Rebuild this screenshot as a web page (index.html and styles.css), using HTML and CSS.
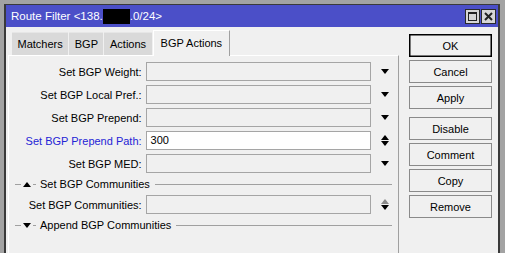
FILE: index.html
```html
<!DOCTYPE html>
<html>
<head>
<meta charset="utf-8">
<link rel="stylesheet" href="styles.css">
</head>
<body>
<div class="window">
  <div class="titlebar">
    <div class="title">Route Filter &lt;138.<span class="redact"></span>.0/24&gt;</div>
    <div class="tb-btns">
      <div class="tb-btn"><span class="max-icon"></span></div>
      <div class="tb-btn">
        <svg width="9" height="9" viewBox="0 0 9 9"><path d="M1 1L8 8M8 1L1 8" stroke="#222" stroke-width="2"/></svg>
      </div>
    </div>
  </div>
  <div class="content">
    <div class="main">
      <div class="tabs">
        <div class="tab">Matchers</div>
        <div class="tab">BGP</div>
        <div class="tab">Actions</div>
        <div class="tab active">BGP Actions</div>
      </div>
      <div class="panel">
        <div class="row">
          <div class="label">Set BGP Weight:</div>
          <div class="field"></div>
          <div class="ctl"><span class="tri-down"></span></div>
        </div>
        <div class="row">
          <div class="label">Set BGP Local Pref.:</div>
          <div class="field"></div>
          <div class="ctl"><span class="tri-down"></span></div>
        </div>
        <div class="row">
          <div class="label">Set BGP Prepend:</div>
          <div class="field"></div>
          <div class="ctl"><span class="tri-down"></span></div>
        </div>
        <div class="row">
          <div class="label blue">Set BGP Prepend Path:</div>
          <div class="field white">300</div>
          <div class="ctl spin"><span class="tri-up"></span><span class="tri-down"></span></div>
        </div>
        <div class="row">
          <div class="label">Set BGP MED:</div>
          <div class="field"></div>
          <div class="ctl"><span class="tri-down"></span></div>
        </div>
        <div class="section">
          <span class="line short"></span>
          <span class="tri-up"></span>
          <span class="line tiny"></span>
          <span class="sec-text">Set BGP Communities</span>
          <span class="line grow"></span>
        </div>
        <div class="row">
          <div class="label">Set BGP Communities:</div>
          <div class="field"></div>
          <div class="ctl spin"><span class="tri-up gray"></span><span class="tri-down"></span></div>
        </div>
        <div class="section sec2">
          <span class="line short"></span>
          <span class="tri-down"></span>
          <span class="line tiny"></span>
          <span class="sec-text">Append BGP Communities</span>
          <span class="line grow"></span>
        </div>
      </div>
    </div>
    <div class="buttons">
      <div class="btn default">OK</div>
      <div class="btn">Cancel</div>
      <div class="btn">Apply</div>
      <div class="btn group">Disable</div>
      <div class="btn">Comment</div>
      <div class="btn">Copy</div>
      <div class="btn">Remove</div>
    </div>
  </div>
</div>
</body>
</html>
```
FILE: styles.css
```css
html, body {
  margin: 0;
  padding: 0;
  background: #a3a3a3;
  font-family: "Liberation Sans", Arial, sans-serif;
  font-size: 11px;
  color: #000;
  overflow: hidden;
}
.window {
  margin: 4px 0 0 4px;
  width: 492px;
  height: 260px;
  border: 2px solid #3a3a3a;
  border-top: 1px solid #3a3a3a;
  border-bottom: none;
  background: #f0f0f0;
}
.titlebar {
  height: 22px;
  background: #4b4fc8;
  display: flex;
  align-items: center;
  justify-content: space-between;
  padding: 0 2px 0 5px;
}
.title {
  color: #fff;
  font-size: 11.5px;
  display: flex;
  align-items: center;
  white-space: pre;
}
.redact {
  display: inline-block;
  width: 27px;
  height: 15px;
  background: #000;
}
.tb-btns {
  display: flex;
  gap: 1px;
  margin-top: 1px;
}
.tb-btn {
  width: 13px;
  height: 13px;
  border: 1px solid #2a2a2a;
  background: #d6d6d6;
  display: flex;
  align-items: center;
  justify-content: center;
}
.max-icon {
  width: 7px;
  height: 6px;
  border: 1px solid #222;
  border-top-width: 2px;
}
.content {
  display: flex;
}
.main {
  margin-left: 2px;
  width: 391px;
}
.tabs {
  height: 28px;
  display: flex;
  align-items: flex-end;
  padding-left: 4px;
}
.tab {
  height: 22px;
  line-height: 22px;
  background: #d9d9d9;
  padding: 0 5.5px;
  margin-right: 1px;
  border-top: 1px solid #e6e6e6;
}
.tab.active {
  height: 25px;
  line-height: 24px;
  background: #f0f0f0;
  border-top: 1px solid #fff;
  border-left: 1px solid #fff;
  border-right: 1px solid #a0a0a0;
  padding: 0 7px;
  margin-bottom: -1px;
  position: relative;
}
.panel {
  border-top: 1px solid #fff;
  border-left: 1px solid #fff;
  border-right: 1px solid #a0a0a0;
  height: 200px;
  padding-top: 4px;
}
.row {
  height: 23px;
  display: flex;
  align-items: center;
}
.label {
  width: 134px;
  text-align: right;
  padding-right: 4px;
}
.label.blue {
  color: #2424d6;
}
.field {
  width: 224px;
  height: 17px;
  border: 1px solid #a5a5a5;
  background: #f0f0f0;
  line-height: 17px;
  padding-left: 2px;
  box-sizing: content-box;
}
.field.white {
  background: #fff;
  width: 222px;
  padding-left: 4px;
}
.ctl {
  width: 27px;
  display: flex;
  flex-direction: column;
  align-items: center;
  justify-content: center;
  gap: 1px;
}
.tri-down {
  display: block;
  width: 0;
  height: 0;
  border-left: 4.5px solid transparent;
  border-right: 4.5px solid transparent;
  border-top: 5px solid #000;
}
.tri-up {
  display: block;
  width: 0;
  height: 0;
  border-left: 4.5px solid transparent;
  border-right: 4.5px solid transparent;
  border-bottom: 5px solid #000;
}
.tri-up.gray {
  border-bottom-color: #8a8a8a;
}
.section {
  height: 18px;
  display: flex;
  align-items: center;
  padding-left: 6px;
  padding-right: 6px;
}
.section .tri-up, .section .tri-down {
  margin: 0 2px;
}
.line {
  display: block;
  height: 1px;
  background: #a0a0a0;
}
.line.short { width: 6px; }
.line.tiny { width: 3px; }
.line.grow { flex: 1; margin-left: 5px; }
.sec-text {
  margin-left: 4px;
}
.buttons {
  margin-left: 10px;
  padding-top: 7px;
  width: 83px;
  display: flex;
  flex-direction: column;
  gap: 3px;
}
.btn {
  height: 21px;
  border: 1px solid #8a8a8a;
  background: #f0f0f0;
  display: flex;
  align-items: center;
  justify-content: center;
}
.btn.default {
  border: 1px solid #000;
  box-shadow: inset 0 0 0 0.5px #000;
}
.btn.group {
  margin-top: 5px;
}
```
